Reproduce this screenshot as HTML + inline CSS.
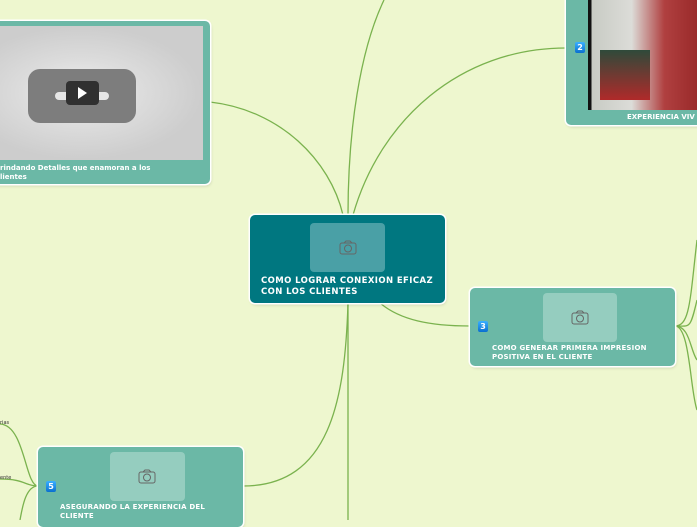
<!DOCTYPE html>
<html><head><meta charset="utf-8"><style>
body{margin:0;width:697px;height:520px;overflow:hidden;background:#eef7cf;font-family:"DejaVu Sans","Liberation Sans",sans-serif;position:relative}
.n{position:absolute;border-radius:5px;background:#6bb8a6;box-shadow:0 0 0 1.5px #fff,1px 2px 3px rgba(0,0,0,.15)}
.ph{position:absolute;border-radius:4px;background:#95cdbf}
.t{position:absolute;color:#fff;font-weight:bold;font-size:7px;line-height:9px;white-space:nowrap}
.b{position:absolute;width:10px;height:11px;border-radius:2px;background:linear-gradient(#3ab0ff,#0a6fd0);color:#fff;font-size:8px;font-weight:bold;text-align:center;line-height:11px}
svg{position:absolute;left:0;top:0}
</style></head><body>
<svg width="697" height="520">
<g fill="none" stroke="#7ab24e" stroke-width="1.3">
<path d="M343 215 C330 160 280 110 210 102"/>
<path d="M348 215 C348 130 360 50 384 0"/>
<path d="M353 215 C380 120 460 48 566 48"/>
<path d="M348 303 C345 400 330 486 243 486"/>
<path d="M348 303 L348 520"/>
<path d="M380 303 C400 320 430 326 470 326"/>
<path d="M675 326 C690 326 690 300 697 240"/>
<path d="M675 326 C690 326 690 330 697 300"/>
<path d="M675 326 C690 326 690 350 697 360"/>
<path d="M675 326 C690 326 690 390 697 410"/>
<path d="M38 486 C25 486 25 425 0 424"/>
<path d="M38 486 C25 486 25 479 0 479"/>
<path d="M38 486 C25 486 22 510 20 520"/>
</g></svg>
<div style="position:absolute;left:0;top:420px;font-size:5px;color:#333">rias</div>
<div style="position:absolute;left:0;top:475px;font-size:5px;color:#333">ente</div>

<div class="n" style="left:-10px;top:21px;width:220px;height:163px"></div>
<div style="position:absolute;left:0;top:26px;width:203px;height:134px;background:radial-gradient(ellipse at 40% 50%,#f2f2f2 0,#dcdcdc 35%,#cdcdcd 70%)"></div>
<div style="position:absolute;left:28px;top:69px;width:108px;height:54px;border-radius:12px;background:#7d7d7d"></div>
<div style="position:absolute;left:55px;top:92px;width:54px;height:8px;border-radius:4px;background:#e6e6e6"></div>
<div style="position:absolute;left:66px;top:81px;width:33px;height:24px;border-radius:4px;background:#303030"></div>
<div style="position:absolute;left:78px;top:87px;width:0;height:0;border-left:9px solid #fff;border-top:6px solid transparent;border-bottom:6px solid transparent"></div>
<div class="t" style="left:0;top:164px">rindando Detalles que enamoran a los<br>lientes</div>

<div class="n" style="left:566px;top:-10px;width:140px;height:135px"></div>
<div style="position:absolute;left:588px;top:0;width:109px;height:110px;background:linear-gradient(90deg,#111 0,#111 3px,#c8cbc4 4px,#dcdcd8 40%,#b04040 70%,#9a2a2a)"></div>
<div style="position:absolute;left:600px;top:50px;width:50px;height:50px;background:linear-gradient(#2f4a3a,#b02a2a)"></div>
<div class="b" style="left:575px;top:42px">2</div>
<div class="t" style="left:627px;top:113px">EXPERIENCIA VIV</div>

<div class="n" style="left:250px;top:215px;width:195px;height:88px;background:#007780"></div>
<div class="ph" style="left:310px;top:223px;width:75px;height:49px;background:#4aa0a6"></div>
<div class="t" style="left:261px;top:276px;font-size:8.5px;line-height:11px;letter-spacing:0.4px">COMO LOGRAR CONEXION EFICAZ<br>CON LOS CLIENTES</div>

<div class="n" style="left:470px;top:288px;width:205px;height:78px"></div>
<div class="ph" style="left:543px;top:293px;width:74px;height:49px"></div>
<div class="b" style="left:478px;top:321px">3</div>
<div class="t" style="left:492px;top:344px;font-size:7px;letter-spacing:0.2px">COMO GENERAR PRIMERA IMPRESION<br>POSITIVA EN EL CLIENTE</div>

<div class="n" style="left:38px;top:447px;width:205px;height:80px"></div>
<div class="ph" style="left:110px;top:452px;width:75px;height:49px"></div>
<div class="b" style="left:46px;top:481px">5</div>
<div class="t" style="left:60px;top:503px;font-size:7px;letter-spacing:0.2px">ASEGURANDO LA EXPERIENCIA DEL<br>CLIENTE</div>

<svg width="697" height="520" style="pointer-events:none">
<g fill="none" stroke="#666" stroke-width="1">
<g transform="translate(348,248)"><rect x="-8" y="-5" width="16" height="11" rx="2"/><path d="M-4 -5 l2 -2 h4 l2 2"/><circle cx="0" cy="0.5" r="3.5"/></g>
<g transform="translate(580,318)"><rect x="-8" y="-5" width="16" height="11" rx="2"/><path d="M-4 -5 l2 -2 h4 l2 2"/><circle cx="0" cy="0.5" r="3.5"/></g>
<g transform="translate(147,477)"><rect x="-8" y="-5" width="16" height="11" rx="2"/><path d="M-4 -5 l2 -2 h4 l2 2"/><circle cx="0" cy="0.5" r="3.5"/></g>
</g></svg>
</body></html>
